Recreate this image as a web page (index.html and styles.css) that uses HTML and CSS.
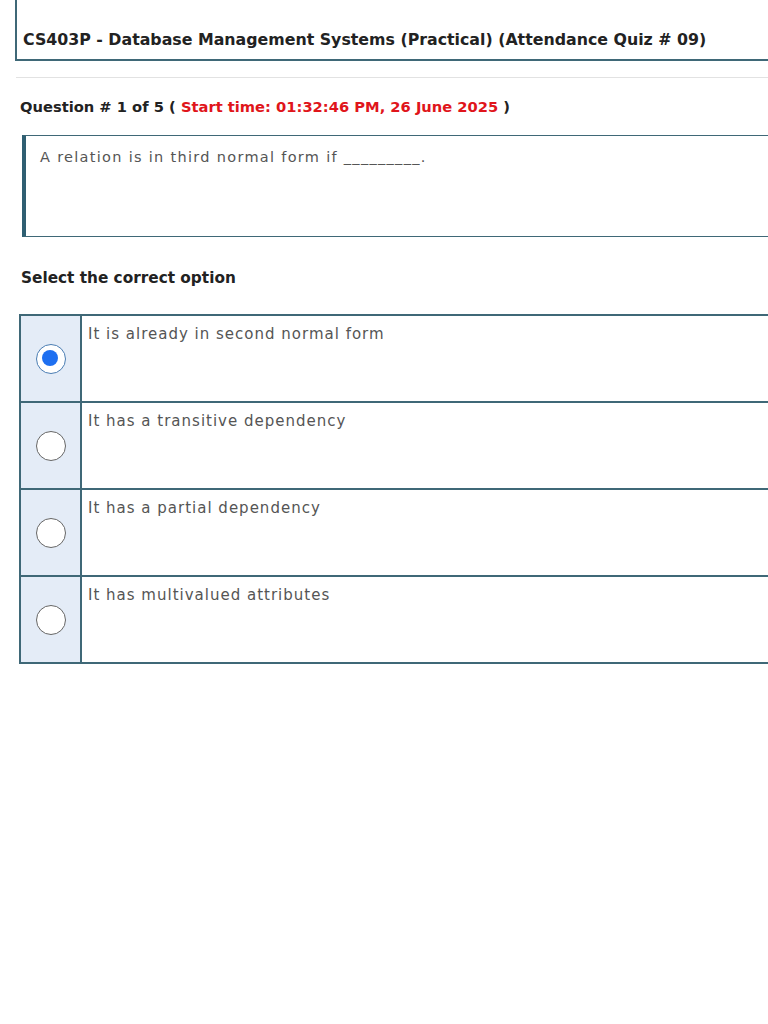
FILE: index.html
```html
<!DOCTYPE html>
<html lang="en">
<head>
  <meta charset="UTF-8">
  <meta name="viewport" content="width=device-width, initial-scale=1.0">
  <title>Attendance Quiz</title>
  <link rel="stylesheet" href="styles.css">
</head>
<body>
  <div class="page">
    <div class="course-box">
      <h1 class="course-title">CS403P - Database Management Systems (Practical) (Attendance Quiz # 09)</h1>
    </div>

    <hr class="divider">

    <h2 class="question-head">Question # 1 of 5 ( <span class="start-time">Start time: 01:32:46 PM, 26 June 2025</span> )</h2>

    <div class="question-box">
      <p>A relation is in third normal form if _________.</p>
    </div>

    <h3 class="select-label">Select the correct option</h3>

    <table class="options">
      <tr>
        <td class="radio-cell"><span class="radio checked"></span></td>
        <td class="option-text">It is already in second normal form</td>
      </tr>
      <tr>
        <td class="radio-cell"><span class="radio"></span></td>
        <td class="option-text">It has a transitive dependency</td>
      </tr>
      <tr>
        <td class="radio-cell"><span class="radio"></span></td>
        <td class="option-text">It has a partial dependency</td>
      </tr>
      <tr>
        <td class="radio-cell"><span class="radio"></span></td>
        <td class="option-text">It has multivalued attributes</td>
      </tr>
    </table>
  </div>
</body>
</html>
```

FILE: styles.css
```css
body {
  margin: 0;
  padding: 0;
  background: #fff;
  font-family: "DejaVu Sans", Inter, sans-serif;
  color: #222;
}

.page {
  overflow: hidden;
  height: 1024px;
}

.course-box {
  margin-left: 15px;
  margin-right: -20px;
  height: 61px;
  border: 2px solid #3f6877;
  border-top: none;
  display: flex;
  align-items: flex-end;
  padding-left: 6px;
  padding-bottom: 10px;
  box-sizing: border-box;
}

.course-title {
  margin: 0;
  font-size: 15.8px;
  font-weight: 700;
  color: #222;
}

.divider {
  margin: 16px 0 0 16px;
  border: none;
  border-top: 1px solid #e2e2e2;
}

.question-head {
  margin: 19px 0 0 20px;
  font-size: 14.7px;
  font-weight: 700;
  color: #222;
  line-height: 20px;
}

.start-time {
  color: #e0151b;
}

.question-box {
  margin: 18px -20px 0 22px;
  height: 102px;
  box-sizing: border-box;
  border: 1px solid #3f6877;
  border-left: 4px solid #2f5f72;
  padding: 13px 14px;
}

.question-box p {
  margin: 0;
  font-size: 14.5px;
  letter-spacing: 1.3px;
  color: #555;
}

.select-label {
  margin: 31px 0 0 21px;
  font-size: 15.3px;
  font-weight: 700;
  color: #222;
  line-height: 20px;
}

.options {
  margin: 26px 0 0 19px;
  width: 780px;
  border-collapse: collapse;
}

.options td {
  border: 2px solid #3f6877;
  height: 87px;
  vertical-align: top;
  box-sizing: border-box;
}

.radio-cell {
  width: 61px;
  background: #e4ecf7;
  vertical-align: middle !important;
  text-align: center;
}

.option-text {
  padding: 9px 6px;
  font-size: 15px;
  letter-spacing: 1px;
  color: #555;
}

.radio {
  display: inline-block;
  width: 30px;
  height: 30px;
  border: 1px solid #666;
  border-radius: 50%;
  background: #fff;
  box-sizing: border-box;
  vertical-align: middle;
  position: relative;
}

.radio.checked {
  border: 1.5px solid #4a7db3;
}

.radio.checked::after {
  content: "";
  position: absolute;
  left: 5.5px;
  top: 5.5px;
  width: 16px;
  height: 16px;
  border-radius: 50%;
  background: #1e6ff0;
}
```
